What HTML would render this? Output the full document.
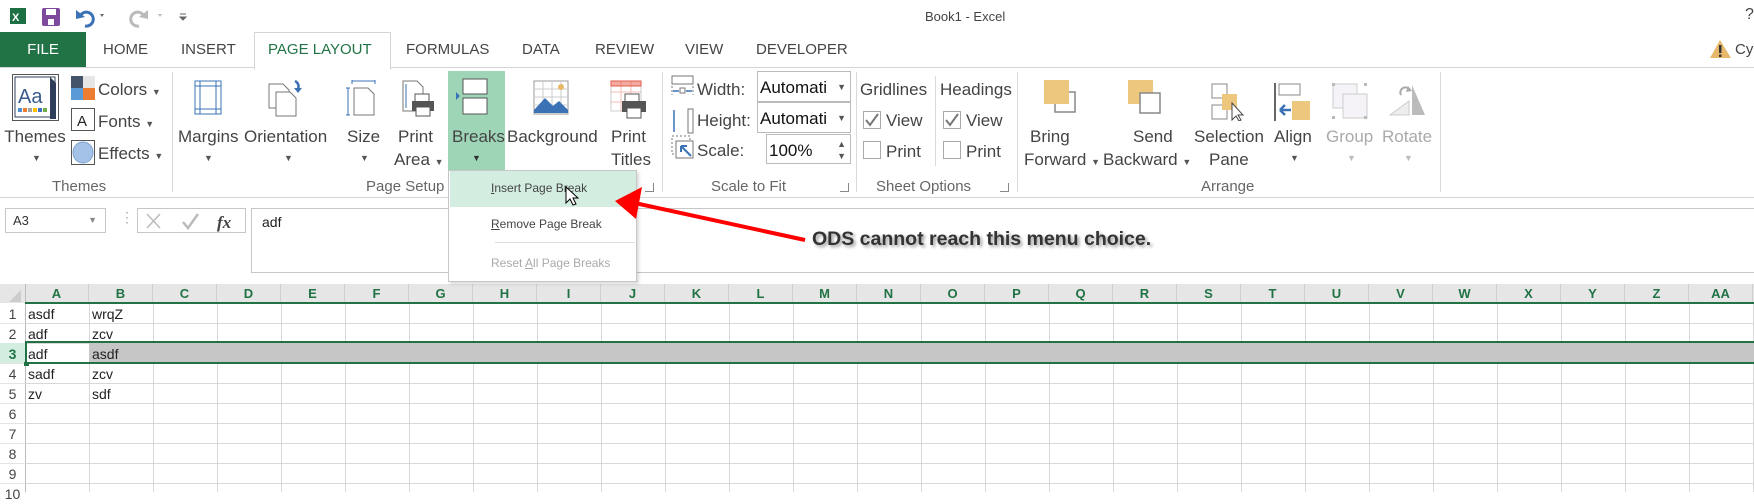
<!DOCTYPE html>
<html><head><meta charset="utf-8"><style>
*{margin:0;padding:0;box-sizing:border-box}
body{width:1754px;height:492px;overflow:hidden;background:#fff;font-family:"Liberation Sans",sans-serif;color:#444;position:relative}
.a{position:absolute;white-space:nowrap}
.t{font-size:15px;color:#444}
.rl{font-size:17px;color:#444;text-align:center}
.gl{font-size:15px;color:#666}
.dd{font-size:9px;color:#555}
.sep{position:absolute;width:1px;background:#dadada}
.ch{position:absolute;top:284px;height:19px;font-size:13px;font-weight:bold;color:#217346;text-align:center;line-height:19px;border-right:1px solid #cfcfcf}
.rh{position:absolute;left:0;width:25px;font-size:14px;color:#444;text-align:center;line-height:20px;height:20px}
.cell{font-size:14px;color:#222;position:absolute;line-height:20px}
.lau{position:absolute;width:9px;height:9px;border:1px solid #888;border-width:0 1px 1px 0}
</style></head><body>
<svg class="a" style="left:8px;top:6px" width="200" height="22">
<rect x="2" y="2" width="16" height="16" fill="#1d7044"/><text x="4" y="15" font-size="11" fill="#fff" font-family="Liberation Sans" font-weight="bold">X</text>
<rect x="34" y="2" width="18" height="18" rx="2" fill="#7e4a9e"/><rect x="38" y="3" width="10" height="6" fill="#fff"/><rect x="40" y="13" width="6" height="6" fill="#fff"/>
<path d="M72 10 a7 7 0 1 1 5 10" stroke="#3a72b5" stroke-width="3" fill="none"/><path d="M68 4 L68 13 L77 11 Z" fill="#3a72b5"/>
<path d="M92 8 l4 0 l-2 3z" fill="#666"/>
<path d="M136 10 a7 7 0 1 0 -5 10" stroke="#bbb" stroke-width="3" fill="none"/><path d="M140 4 L140 13 L131 11 Z" fill="#bbb"/>
<path d="M150 8 l4 0 l-2 3z" fill="#bbb"/>
<path d="M172 8 l6 0 M172 11 l6 0 l-3 3z" stroke="#666" fill="#666"/>
</svg>
<div class="a" style="left:925px;top:9px;font-size:13px;color:#444">Book1 - Excel</div>
<div class="a" style="left:1745px;top:6px;font-size:16px;color:#444">?</div>
<div class="a" style="left:0;top:32px;width:86px;height:36px;background:#217346;color:#fff;font-size:15px;text-align:center;line-height:36px">FILE</div>
<div class="a" style="left:254px;top:32px;width:137px;height:38px;border:1px solid #d5d5d5;border-bottom:none;background:#fff"></div>
<div class="a" style="left:0;top:67px;width:254px;height:1px;background:#d5d5d5"></div>
<div class="a" style="left:390px;top:67px;width:1364px;height:1px;background:#d5d5d5"></div>
<div class="a t" style="left:103px;top:41px">HOME</div>
<div class="a t" style="left:181px;top:41px">INSERT</div>
<div class="a t" style="left:268px;top:41px;color:#217346">PAGE LAYOUT</div>
<div class="a t" style="left:406px;top:41px">FORMULAS</div>
<div class="a t" style="left:522px;top:41px">DATA</div>
<div class="a t" style="left:595px;top:41px">REVIEW</div>
<div class="a t" style="left:685px;top:41px">VIEW</div>
<div class="a t" style="left:756px;top:41px">DEVELOPER</div>
<svg class="a" style="left:1709px;top:39px" width="24" height="20"><path d="M11 1 L22 19 L1 19Z" fill="#e8b86a"/><rect x="10" y="6" width="2.5" height="8" fill="#333"/><rect x="10" y="15.5" width="2.5" height="2.5" fill="#333"/></svg>
<div class="a t" style="left:1735px;top:41px">Cy</div>
<div class="a" style="left:0;top:197px;width:1754px;height:1px;background:#d5d5d5"></div>
<svg class="a" style="left:12px;top:74px" width="48" height="48"><rect x="0.5" y="0.5" width="46" height="46" fill="#fff" stroke="#555"/><rect x="3" y="3" width="40" height="40" fill="#fff" stroke="#2f3f5a"/><path d="M38 3 l6 6 l0 36 l-6 0z" fill="#2f3f5a"/><text x="6" y="29" font-size="20" fill="#3a5b8c" font-family="Liberation Sans">Aa</text><g><rect x="6" y="34" width="4" height="4" fill="#4f8ed0"/><rect x="11" y="34" width="4" height="4" fill="#ed7d31"/><rect x="16" y="34" width="4" height="4" fill="#a5a5a5"/><rect x="21" y="34" width="4" height="4" fill="#ffc000"/><rect x="26" y="34" width="4" height="4" fill="#4472c4"/><rect x="31" y="34" width="4" height="4" fill="#70ad47"/></g></svg>
<div class="a rl" style="left:4px;top:127px;width:62px">Themes</div>
<div class="a dd" style="left:32px;top:153px">▼</div>
<svg class="a" style="left:71px;top:76px" width="25" height="92"><rect x="0" y="0" width="12" height="12" fill="#44546a"/><rect x="12" y="0" width="12" height="12" fill="#e7e6e6"/><rect x="0" y="12" width="12" height="12" fill="#5b9bd5"/><rect x="12" y="12" width="12" height="12" fill="#ed7d31"/><rect x="0.5" y="32.5" width="23" height="22" fill="#fff" stroke="#555"/><text x="6" y="50" font-size="15" fill="#222" font-family="Liberation Sans">A</text><rect x="0.5" y="64.5" width="23" height="24" fill="#fff" stroke="#555"/><ellipse cx="12" cy="76.5" rx="10" ry="10.5" fill="#a4c2e8" stroke="#7da2d0"/></svg>
<div class="a rl" style="left:98px;top:80px">Colors <span class="dd">▼</span></div>
<div class="a rl" style="left:98px;top:112px">Fonts <span class="dd">▼</span></div>
<div class="a rl" style="left:98px;top:144px">Effects <span class="dd">▼</span></div>
<div class="a gl" style="left:52px;top:178px">Themes</div>
<div class="sep" style="left:172px;top:72px;height:120px"></div>
<svg class="a" style="left:194px;top:80px" width="30" height="36"><rect x="1" y="1" width="26" height="33" fill="#fff" stroke="#3a72b5"/><path d="M6 1v33M22 1v33M1 6h26M1 29h26" stroke="#3a72b5"/></svg>
<div class="a rl" style="left:178px;top:127px">Margins</div><div class="a dd" style="left:204px;top:153px">▼</div>
<svg class="a" style="left:268px;top:78px" width="40" height="40"><path d="M1 6h14l6 6v18H1z" fill="#fff" stroke="#777"/><path d="M8 14h14l6 6v18H8z" fill="#fff" stroke="#777"/><path d="M27 3a6 6 0 0 1 3 8" stroke="#3a72b5" stroke-width="2.5" fill="none"/><path d="M26 10l8 0l-4 5z" fill="#3a72b5"/></svg>
<div class="a rl" style="left:244px;top:127px">Orientation</div><div class="a dd" style="left:284px;top:153px">▼</div>
<svg class="a" style="left:346px;top:80px" width="34" height="36"><path d="M6 1h23M6 0v4M29 0v4" stroke="#3a72b5"/><path d="M2 8v27M0 8h4M0 35h4" stroke="#3a72b5"/><path d="M8 8h14l6 6v21H8z" fill="#fff" stroke="#777"/></svg>
<div class="a rl" style="left:347px;top:127px">Size</div><div class="a dd" style="left:360px;top:153px">▼</div>
<svg class="a" style="left:402px;top:80px" width="40" height="40"><path d="M1 1h14l6 6v24H1z" fill="#fff" stroke="#777"/><path d="M4 4v24" stroke="#3a72b5"/><rect x="13" y="14" width="14" height="8" fill="#fff" stroke="#555"/><rect x="10" y="21" width="22" height="10" fill="#555"/><rect x="14" y="27" width="14" height="9" fill="#fff" stroke="#555"/></svg>
<div class="a rl" style="left:398px;top:127px">Print</div>
<div class="a rl" style="left:394px;top:150px">Area <span class="dd">▼</span></div>
<div class="a" style="left:448px;top:71px;width:57px;height:100px;background:#9fd5b7"></div>
<svg class="a" style="left:456px;top:78px" width="40" height="40"><rect x="7" y="1" width="24" height="15" fill="#fff" stroke="#555"/><rect x="7" y="20" width="24" height="16" fill="#fff" stroke="#555"/><path d="M0 14l4 4l-4 4z" fill="#3a72b5"/></svg>
<div class="a rl" style="left:452px;top:127px">Breaks</div><div class="a dd" style="left:472px;top:153px;color:#333">▼</div>
<svg class="a" style="left:533px;top:80px" width="38" height="36"><rect x="1" y="1" width="34" height="33" fill="#fff" stroke="#999"/><path d="M1 9h34M1 17h34M1 25h34M10 1v33M19 1v33M28 1v33" stroke="#ccc"/><circle cx="28" cy="7" r="3" fill="#e8b86a"/><path d="M1 30l11-12l8 8l6-5l9 9v3H1z" fill="#3a72b5"/></svg>
<div class="a rl" style="left:507px;top:127px">Background</div>
<svg class="a" style="left:610px;top:80px" width="40" height="40"><rect x="1" y="1" width="30" height="30" fill="#fff" stroke="#ccc"/><path d="M1 1h30v5H1z" fill="#f4aaa0" stroke="#e25b4b"/><path d="M11 1v30M21 1v30M1 12h30M1 22h30" stroke="#e25b4b" stroke-opacity=".4"/><rect x="15" y="14" width="14" height="8" fill="#fff" stroke="#555"/><rect x="12" y="21" width="24" height="11" fill="#555"/><rect x="17" y="28" width="14" height="10" fill="#fff" stroke="#555"/></svg>
<div class="a rl" style="left:611px;top:127px">Print</div>
<div class="a rl" style="left:611px;top:150px">Titles</div>
<div class="a gl" style="left:366px;top:178px">Page Setup</div>
<div class="lau" style="left:645px;top:183px"></div>
<div class="sep" style="left:662px;top:72px;height:120px"></div>
<svg class="a" style="left:671px;top:75px" width="26" height="95"><rect x="1" y="1" width="21" height="8" fill="#fff" stroke="#777"/><path d="M1 11v9M22 11v9" stroke="#777" stroke-dasharray="2 2"/><rect x="9" y="13" width="5" height="5" fill="none" stroke="#777"/><path d="M2 16h6M15 16h6" stroke="#3a72b5" stroke-width="1.5"/><rect x="17" y="34" width="5" height="24" fill="#fff" stroke="#777"/><path d="M3 35v22" stroke="#3a72b5" stroke-width="1.5"/><rect x="1" y="61" width="18" height="18" fill="none" stroke="#777" stroke-dasharray="2 2"/><rect x="5" y="66" width="17" height="17" fill="#fff" stroke="#777"/><path d="M20 81l-10-10M10 71h6M10 71v6" stroke="#3a72b5" stroke-width="2"/></svg>
<div class="a rl" style="left:697px;top:80px">Width:</div>
<div class="a rl" style="left:697px;top:111px">Height:</div>
<div class="a rl" style="left:697px;top:141px">Scale:</div>
<div class="a" style="left:757px;top:71px;width:94px;height:31px;border:1px solid #bbb;font-size:17px;color:#111;padding:6px 0 0 2px;overflow:hidden">Automati<span class="dd" style="position:absolute;right:4px;top:10px">▼</span></div>
<div class="a" style="left:757px;top:102px;width:94px;height:31px;border:1px solid #bbb;font-size:17px;color:#111;padding:6px 0 0 2px;overflow:hidden">Automati<span class="dd" style="position:absolute;right:4px;top:10px">▼</span></div>
<div class="a" style="left:766px;top:134px;width:85px;height:30px;border:1px solid #bbb;font-size:17px;color:#111;padding:6px 0 0 2px">100%<span class="dd" style="position:absolute;right:4px;top:4px">▲</span><span class="dd" style="position:absolute;right:4px;top:16px">▼</span></div>
<div class="a gl" style="left:711px;top:178px">Scale to Fit</div>
<div class="lau" style="left:840px;top:183px"></div>
<div class="sep" style="left:856px;top:72px;height:120px"></div>
<div class="a rl" style="left:860px;top:80px">Gridlines</div>
<div class="a rl" style="left:940px;top:80px">Headings</div>
<div class="sep" style="left:935px;top:76px;height:90px"></div>
<svg class="a" style="left:863px;top:111px" width="160" height="50"><rect x="0.5" y="0.5" width="17" height="17" fill="#fff" stroke="#aaa"/><path d="M3 9l4 5l8-11" stroke="#777" stroke-width="2" fill="none"/><rect x="0.5" y="30.5" width="17" height="17" fill="#fff" stroke="#aaa"/><rect x="80.5" y="0.5" width="17" height="17" fill="#fff" stroke="#aaa"/><path d="M83 9l4 5l8-11" stroke="#777" stroke-width="2" fill="none"/><rect x="80.5" y="30.5" width="17" height="17" fill="#fff" stroke="#aaa"/></svg>
<div class="a rl" style="left:886px;top:111px">View</div>
<div class="a rl" style="left:886px;top:142px">Print</div>
<div class="a rl" style="left:966px;top:111px">View</div>
<div class="a rl" style="left:966px;top:142px">Print</div>
<div class="a gl" style="left:876px;top:178px">Sheet Options</div>
<div class="lau" style="left:1000px;top:183px"></div>
<div class="sep" style="left:1017px;top:72px;height:120px"></div>
<svg class="a" style="left:1044px;top:80px" width="36" height="36"><rect x="11" y="12" width="20" height="20" fill="#fff" stroke="#888" stroke-width="1.5"/><rect x="0" y="0" width="25" height="24" fill="#eec77e"/></svg>
<div class="a rl" style="left:1030px;top:127px">Bring</div>
<div class="a rl" style="left:1024px;top:150px">Forward <span class="dd">▼</span></div>
<svg class="a" style="left:1128px;top:80px" width="36" height="36"><rect x="0" y="0" width="25" height="24" fill="#eec77e"/><rect x="12" y="13" width="20" height="20" fill="#fff" stroke="#888" stroke-width="1.5"/></svg>
<div class="a rl" style="left:1133px;top:127px">Send</div>
<div class="a rl" style="left:1103px;top:150px">Backward <span class="dd">▼</span></div>
<svg class="a" style="left:1211px;top:83px" width="34" height="38"><rect x="1" y="1" width="15" height="14" fill="#fff" stroke="#888"/><rect x="1" y="22" width="15" height="14" fill="#fff" stroke="#888"/><rect x="11" y="11" width="15" height="16" fill="#eec77e"/><path d="M21 20v17l4-4l3 5l2-1l-3-5h5z" fill="#fff" stroke="#444"/></svg>
<div class="a rl" style="left:1194px;top:127px">Selection</div>
<div class="a rl" style="left:1209px;top:150px">Pane</div>
<svg class="a" style="left:1274px;top:83px" width="38" height="38"><path d="M1 0v38" stroke="#666" stroke-width="2"/><rect x="5" y="1" width="21" height="11" fill="#fff" stroke="#888"/><rect x="18" y="18" width="18" height="19" fill="#eec77e"/><path d="M6 27h11M6 27l5-5M6 27l5 5" stroke="#3a72b5" stroke-width="2.5"/></svg>
<div class="a rl" style="left:1274px;top:127px">Align</div><div class="a dd" style="left:1290px;top:153px">▼</div>
<svg class="a" style="left:1332px;top:83px" width="36" height="38"><rect x="1" y="1" width="24" height="24" fill="#f5f2f8" stroke="#ccc"/><rect x="11" y="11" width="24" height="24" fill="#f5f2f8" stroke="#ccc"/><rect x="0" y="0" width="3" height="3" fill="#bbb"/><rect x="32" y="0" width="3" height="3" fill="#bbb"/><rect x="0" y="33" width="3" height="3" fill="#bbb"/><rect x="32" y="33" width="3" height="3" fill="#bbb"/></svg>
<div class="a rl" style="left:1326px;top:127px;color:#aaa">Group</div><div class="a dd" style="left:1347px;top:153px;color:#bbb">▼</div>
<svg class="a" style="left:1389px;top:83px" width="40" height="36"><path d="M1 32L20 18V32z" fill="#eee" stroke="#ccc"/><path d="M23 2L36 32H23z" fill="#bbb"/><path d="M12 12a5 5 0 0 1 9-5" stroke="#aaa" stroke-width="2" fill="none"/><path d="M19 3l4 5l-6 1z" fill="#aaa"/></svg>
<div class="a rl" style="left:1382px;top:127px;color:#aaa">Rotate</div><div class="a dd" style="left:1404px;top:153px;color:#bbb">▼</div>
<div class="a gl" style="left:1201px;top:178px">Arrange</div>
<div class="sep" style="left:1440px;top:72px;height:120px"></div>
<div class="a" style="left:5px;top:208px;width:101px;height:25px;border:1px solid #c6c6c6;font-size:13px;color:#333;padding:4px 0 0 7px">A3<span class="dd" style="position:absolute;right:8px;top:6px;color:#888">▼</span></div>
<div class="a" style="left:120px;top:209px;font-size:14px;color:#aaa">⋮</div>
<div class="a" style="left:137px;top:208px;width:109px;height:25px;border:1px solid #c6c6c6"></div>
<svg class="a" style="left:145px;top:212px" width="100" height="20"><path d="M2 2l13 14M15 2L2 16" stroke="#bbb" stroke-width="1.5"/><path d="M38 10l5 6l10-14" stroke="#bbb" stroke-width="2.5" fill="none"/><text x="72" y="16" font-size="17" font-style="italic" font-family="Liberation Serif" fill="#444" font-weight="bold">fx</text></svg>
<div class="a" style="left:251px;top:208px;width:1510px;height:65px;border:1px solid #c6c6c6"></div>
<div class="a" style="left:262px;top:214px;font-size:14px;color:#222">adf</div>
<div class="a" style="left:0;top:284px;width:1754px;height:19px;background:#e6e6e6"></div>
<svg class="a" style="left:8px;top:289px" width="14" height="14"><path d="M13 1V13H1z" fill="#ccc"/></svg>
<div class="a" style="left:25px;top:284px;width:1px;height:208px;background:#bbb"></div>
<div id="cols"></div>
<div class="a" style="left:25px;top:302px;width:1729px;height:2px;background:#217346"></div>
<svg class="a" style="left:0;top:304px" width="1754" height="188">
<g stroke="#d8d8d8" stroke-width="1">
<path d="M25 19.5H1754M25 39.5H1754M25 59.5H1754M25 79.5H1754M25 99.5H1754M25 119.5H1754M25 139.5H1754M25 159.5H1754M25 179.5H1754"/>
<path d="M0 19.5H25M0 39.5H25M0 59.5H25M0 79.5H25M0 99.5H25M0 119.5H25M0 139.5H25M0 159.5H25M0 179.5H25" stroke="#e4e4e4"/>
<path id="vl" d=""/>
</g></svg>
<div class="a" style="left:89px;top:343px;width:1665px;height:20px;background:#c6c6c6"></div>
<div class="a" style="left:0;top:343px;width:25px;height:20px;background:#d3eee0"></div>
<div class="a" style="left:25px;top:341px;width:1729px;height:2px;background:#217346"></div>
<div class="a" style="left:25px;top:362px;width:1729px;height:2px;background:#217346"></div>
<div class="a" style="left:25px;top:341px;width:2px;height:23px;background:#217346"></div>
<div class="a" style="left:24px;top:362px;width:5px;height:4px;background:#217346"></div>
<div class="rh" style="top:304px">1</div><div class="rh" style="top:324px">2</div><div class="rh" style="top:344px;font-weight:bold;color:#217346">3</div><div class="rh" style="top:364px">4</div><div class="rh" style="top:384px">5</div><div class="rh" style="top:404px">6</div><div class="rh" style="top:424px">7</div><div class="rh" style="top:444px">8</div><div class="rh" style="top:464px">9</div><div class="rh" style="top:484px">10</div>
<div class="cell" style="left:28px;top:304px">asdf</div><div class="cell" style="left:92px;top:304px">wrqZ</div>
<div class="cell" style="left:28px;top:324px">adf</div><div class="cell" style="left:92px;top:324px">zcv</div>
<div class="cell" style="left:28px;top:344px">adf</div><div class="cell" style="left:92px;top:344px">asdf</div>
<div class="cell" style="left:28px;top:364px">sadf</div><div class="cell" style="left:92px;top:364px">zcv</div>
<div class="cell" style="left:28px;top:384px">zv</div><div class="cell" style="left:92px;top:384px">sdf</div>
<div class="a" style="left:448px;top:170px;width:189px;height:112px;background:#fff;border:1px solid #c6c6c6;box-shadow:2px 2px 3px rgba(0,0,0,.15)"></div>
<div class="a" style="left:450px;top:171px;width:186px;height:36px;background:#d3eee0"></div>
<div class="a" style="left:491px;top:181px;font-size:12px;color:#444"><u>I</u>nsert Page Break</div>
<div class="a" style="left:491px;top:217px;font-size:12px;color:#444"><u>R</u>emove Page Break</div>
<div class="a" style="left:495px;top:242px;width:140px;height:1px;background:#ddd"></div>
<div class="a" style="left:491px;top:256px;font-size:12px;color:#aaa">Reset <u>A</u>ll Page Breaks</div>
<svg class="a" style="left:565px;top:186px" width="16" height="22"><path d="M1 1v16l4-4l3 6l3-1l-3-6h5z" fill="#fff" stroke="#000"/></svg>
<svg class="a" style="left:600px;top:185px" width="220" height="70"><path d="M205 55L30 17" stroke="#f00" stroke-width="4"/><path d="M15 16L42 2L36 34Z" fill="#f00"/></svg>
<div class="a" style="left:812px;top:228px;font-size:19.5px;font-weight:bold;color:#333;text-shadow:2px 2px 3px rgba(0,0,0,.4)">ODS cannot reach this menu choice.</div>
<script>
var L="ABCDEFGHIJKLMNOPQRSTUVWXYZ".split("").concat(["AA"]),h="",d="";
for(var i=0;i<27;i++){var x=25+i*64;h+='<div class="ch" style="left:'+x+'px;width:64px">'+L[i]+'</div>';d+="M"+(x+64.5)+" 0V188";}
document.getElementById("cols").outerHTML=h;document.getElementById("vl").setAttribute("d",d);
</script>
</body></html>
